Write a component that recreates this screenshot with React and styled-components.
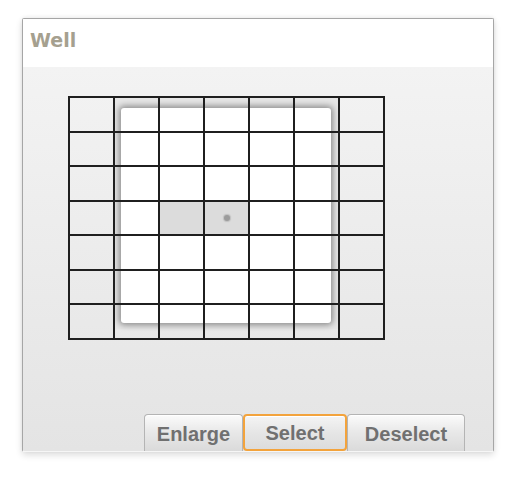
import React from 'react'
import styled, { createGlobalStyle } from 'styled-components'

const Global = createGlobalStyle`
  html, body {
    margin: 0;
    padding: 0;
    background: #ffffff;
  }
`;

const COLS = 7;
const ROWS = 7;
// row, col of the cells that are picked
const picked = [[3, 2], [3, 3]];
const dot = [3, 3];

const Well = () => {
  const cells = [];
  for (let r = 0; r < ROWS; r++) {
    for (let c = 0; c < COLS; c++) {
      const on = picked.some(([pr, pc]) => pr === r && pc === c);
      const hasDot = dot[0] === r && dot[1] === c;
      cells.push(
        <Cell key={r + '-' + c} $picked={on}>
          {hasDot && <Dot />}
        </Cell>
      );
    }
  }

  return (
    <Page>
      <Global />
      <Panel>
        <Header>
          <Title>Well</Title>
        </Header>
        <Body>
          <Plate>
            <Rim>
              <Basin />
            </Rim>
            <Grid>{cells}</Grid>
          </Plate>
          <Tabs>
            <Tab $w={99}>Enlarge</Tab>
            <Tab $w={104} $active>Select</Tab>
            <Tab $w={118}>Deselect</Tab>
          </Tabs>
        </Body>
      </Panel>
    </Page>
  )
}

//=====================================
//    Styling of the Components
//=====================================

const Page = styled.div`
  width: 524px;
  height: 484px;
  padding: 18px 0 0 22px;
  box-sizing: border-box;
`;

const Panel = styled.div`
  width: 472px;
  height: 434px;
  box-sizing: border-box;
  border: 1px solid #a6a6a6;
  border-bottom-color: #f6f6f6;
  border-radius: 2px;
  box-shadow: 0 3px 7px rgba(0, 0, 0, 0.14), 0 -1px 4px rgba(0, 0, 0, 0.05);
  display: flex;
  flex-direction: column;
  overflow: hidden;
`;

const Header = styled.div`
  height: 48px;
  flex: none;
  box-sizing: border-box;
  padding: 10px 0 0 7px;
  background: #ffffff;
`;

const Title = styled.div`
  font-family: "DejaVu Sans", sans-serif;
  font-weight: bold;
  font-size: 19px;
  line-height: 22px;
  color: #a5a08f;
`;

const Body = styled.div`
  flex: 1;
  display: flex;
  flex-direction: column;
  padding: 29px 0 0 45px;
  background: linear-gradient(#f3f3f3, #e4e4e4);
`;

const Plate = styled.div`
  position: relative;
  width: 317px;
  height: 244px;
`;

// light rim of the well plate, sits under the grid lines
const Rim = styled.div`
  position: absolute;
  left: 45px;
  top: 2px;
  width: 225px;
  height: 231px;
  background: #e6e6e6;
  padding: 10px 7px 6px 8px;
  box-sizing: border-box;
`;

const Basin = styled.div`
  width: 100%;
  height: 100%;
  background: #ffffff;
  border-radius: 3px;
  box-shadow: 0 0 6px 2px rgba(0, 0, 0, 0.4);
`;

const Grid = styled.div`
  position: relative;
  width: 100%;
  height: 100%;
  box-sizing: border-box;
  display: grid;
  grid-template-columns: repeat(7, 1fr);
  grid-template-rows: repeat(7, 1fr);
  border-top: 2px solid #1f1f1f;
  border-left: 2px solid #1f1f1f;
`;

const Cell = styled.div`
  position: relative;
  border-right: 2px solid #1f1f1f;
  border-bottom: 2px solid #1f1f1f;
  background: ${p => (p.$picked ? '#dcdcdc' : 'transparent')};
  display: flex;
  align-items: center;
  justify-content: center;
`;

const Dot = styled.div`
  width: 6px;
  height: 6px;
  border-radius: 50%;
  background: #9c9c9c;
  box-shadow: 0 0 1px 1px rgba(150, 150, 150, 0.4);
`;

const Tabs = styled.div`
  margin-top: auto;
  align-self: flex-end;
  margin-right: 28px;
  display: flex;
`;

const Tab = styled.div`
  width: ${p => p.$w}px;
  height: 37px;
  box-sizing: border-box;
  padding-top: 2px;
  display: flex;
  align-items: center;
  justify-content: center;
  font-family: "Liberation Sans", Arial, sans-serif;
  font-weight: bold;
  font-size: 20px;
  color: #707070;
  background: linear-gradient(#fbfbfb, #e9e9e9 45%, #dadada);
  border: 1px solid #b4b4b4;
  border-bottom: none;
  border-radius: 4px 4px 0 0;
  box-shadow: inset 0 1px 0 #ffffff;
  ${p => p.$active && `
    border: 2px solid #f3a33c;
    border-radius: 4px;
    background: linear-gradient(#f4f4f4, #e6e6e6 50%, #dcdcdc);
  `}
`;

export default Well;
